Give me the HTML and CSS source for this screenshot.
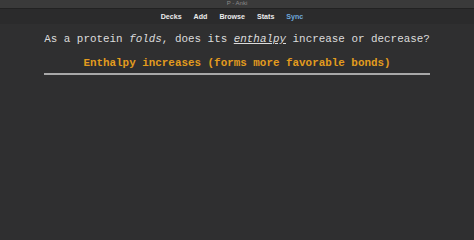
FILE: index.html
```html
<!DOCTYPE html>
<html lang="en">
<head>
  <meta charset="UTF-8" />
  <title>P - Anki</title>
  <link rel="stylesheet" href="styles.css">
</head>
<body>
  <div class="titlebar">P - Anki</div>
  <nav class="toolbar">
    <a href="#">Decks</a>
    <a href="#">Add</a>
    <a href="#">Browse</a>
    <a href="#">Stats</a>
    <a href="#" class="sync">Sync</a>
  </nav>

  <div class="card">
    <div class="question">As a protein <i>folds</i>, does its <u><i>enthalpy</i></u> increase or decrease?</div>
    <div class="answer">Enthalpy increases (forms more favorable bonds)</div>
    <hr>
  </div>
</body>
</html>
```

FILE: styles.css
```css
body {
  margin: 0;
  background: #2f2f30;
  font-family: "Liberation Sans", Arial, sans-serif;
  height: 240px;
}

.titlebar {
  height: 8px;
  background: #3a3a3a;
  color: #8a8a8a;
  font-size: 6px;
  line-height: 6px;
  text-align: center;
  border-bottom: 1px solid #222;
}

.toolbar {
  height: 15px;
  background: #2b2b2c;
  display: flex;
  justify-content: center;
  align-items: center;
  gap: 12px;
  padding-right: 10px;
}

.toolbar a {
  color: #ececec;
  font-weight: bold;
  font-size: 7.1px;
  text-decoration: none;
}

.toolbar a.sync {
  color: #6fa8dc;
}

.card {
  font-family: "Liberation Mono", "Courier New", monospace;
  font-size: 10.9px;
  text-align: center;
  color: #dcdcdc;
  padding: 8px 44px 0;
}

.question {
  line-height: 14px;
}

.answer {
  margin-top: 10px;
  color: #e39c1e;
  font-weight: bold;
  line-height: 14px;
}

hr {
  margin: 3px 0 0;
  border: none;
  height: 2px;
  background: #a8a8a8;
}
```
